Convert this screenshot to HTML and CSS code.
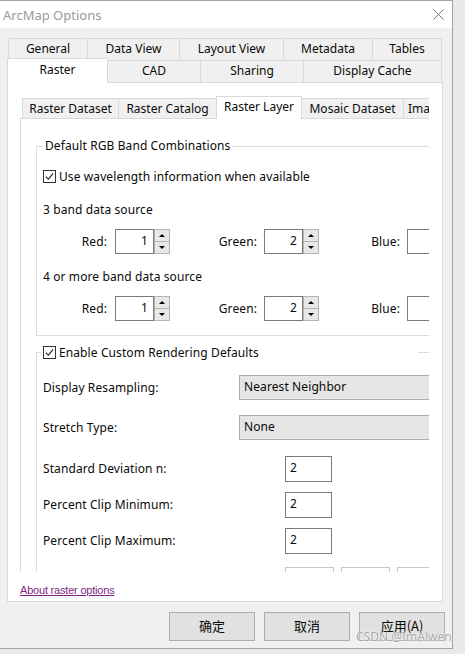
FILE: index.html
```html
<!DOCTYPE html>
<html>
<head>
<meta charset="utf-8">
<link rel="stylesheet" href="styles.css">
</head>
<body>
<div class="window">
  <div class="titlebar">
    <span class="title">ArcMap Options</span>
    <svg class="close" width="11" height="11" viewBox="0 0 11 11"><path d="M0.5 0.5 L10.5 10.5 M10.5 0.5 L0.5 10.5" stroke="#777" stroke-width="1" fill="none"/></svg>
  </div>
  <div class="client">
    <div class="tabrow row1">
      <div class="tab w79">General</div>
      <div class="tab w92">Data View</div>
      <div class="tab w104">Layout View</div>
      <div class="tab w89">Metadata</div>
      <div class="tab w70 last">Tables</div>
    </div>
    <div class="tabrow row2">
      <div class="tab sel w100">Raster</div>
      <div class="tab w93">CAD</div>
      <div class="tab w103">Sharing</div>
      <div class="tab w139 last">Display Cache</div>
    </div>
    <div class="panel">
      <div class="inner">
        <div class="itabs">
          <div class="itab first w96">Raster Dataset</div>
          <div class="itab w98">Raster Catalog</div>
          <div class="itab isel w86">Raster Layer</div>
          <div class="itab w101">Mosaic Dataset</div>
          <div class="itab w56">Imagery</div>
        </div>
        <div class="ipanel">
          <fieldset class="group g1">
            <legend class="legend-text">Default RGB Band Combinations</legend>
            <div class="gbody g1body">
              <div class="checkrow">
                <svg class="cb" width="13" height="13" viewBox="0 0 13 13"><rect x="0.5" y="0.5" width="12" height="12" fill="#fff" stroke="#333"/><path d="M2.8 6.6 L5.3 9.2 L10.2 3.4" stroke="#222" stroke-width="1.1" fill="none"/></svg>
                <span>Use wavelength information when available</span>
              </div>
              <div class="sub">3 band data source</div>
              <div class="spinrow">
                <span class="lbl l1">Red:</span>
                <div class="spin"><div class="sval">1</div><div class="sbtns"><div class="sbtn"><i class="up"></i></div><div class="sbtn dn"><i class="down"></i></div></div></div>
                <span class="lbl l2">Green:</span>
                <div class="spin"><div class="sval">2</div><div class="sbtns"><div class="sbtn"><i class="up"></i></div><div class="sbtn dn"><i class="down"></i></div></div></div>
                <span class="lbl l3">Blue:</span>
                <div class="spin"><div class="sval">3</div><div class="sbtns"><div class="sbtn"><i class="up"></i></div><div class="sbtn dn"><i class="down"></i></div></div></div>
              </div>
              <div class="sub sub2">4 or more band data source</div>
              <div class="spinrow">
                <span class="lbl l1">Red:</span>
                <div class="spin"><div class="sval">1</div><div class="sbtns"><div class="sbtn"><i class="up"></i></div><div class="sbtn dn"><i class="down"></i></div></div></div>
                <span class="lbl l2">Green:</span>
                <div class="spin"><div class="sval">2</div><div class="sbtns"><div class="sbtn"><i class="up"></i></div><div class="sbtn dn"><i class="down"></i></div></div></div>
                <span class="lbl l3">Blue:</span>
                <div class="spin"><div class="sval">3</div><div class="sbtns"><div class="sbtn"><i class="up"></i></div><div class="sbtn dn"><i class="down"></i></div></div></div>
              </div>
            </div>
          </fieldset>
          <fieldset class="group g2">
            <legend class="legend-check">
              <svg class="cb" width="13" height="13" viewBox="0 0 13 13"><rect x="0.5" y="0.5" width="12" height="12" fill="#fff" stroke="#333"/><path d="M2.8 6.6 L5.3 9.2 L10.2 3.4" stroke="#222" stroke-width="1.1" fill="none"/></svg>
              <span>Enable Custom Rendering Defaults</span>
            </legend>
            <div class="gbody g2body">
              <div class="frow r1">
                <span class="flbl">Display Resampling:</span>
                <div class="combo">Nearest Neighbor</div>
              </div>
              <div class="frow r2">
                <span class="flbl">Stretch Type:</span>
                <div class="combo">None</div>
              </div>
              <div class="frow r3">
                <span class="flbl wide">Standard Deviation n:</span>
                <div class="tbox">2</div>
              </div>
              <div class="frow r4">
                <span class="flbl wide">Percent Clip Minimum:</span>
                <div class="tbox">2</div>
              </div>
              <div class="frow r4">
                <span class="flbl wide">Percent Clip Maximum:</span>
                <div class="tbox">2</div>
              </div>
              <div class="frow r5">
                <span class="flbl wide"></span>
                <div class="gbox"></div>
                <div class="gbox"></div>
                <div class="gbox"></div>
              </div>
            </div>
          </fieldset>
        </div>
      </div>
      <a class="about" href="#">About raster options</a>
    </div>
    <div class="buttons">
      <div class="btn">确定</div>
      <div class="btn">取消</div>
      <div class="btn">应用(A)</div>
    </div>
  </div>
</div>
<div class="watermark">CSDN @ImAlwen</div>
</body>
</html>
```
FILE: styles.css
```css
* { box-sizing: border-box; }
html, body { margin: 0; padding: 0; }
body {
  width: 465px;
  height: 654px;
  overflow: hidden;
  position: relative;
  background: #e9e9e9;
  font-family: "Noto Sans", "Noto Sans CJK SC", sans-serif;
  font-size: 12px;
  color: #0a0a0a;
}
.window {
  width: 453px;
  height: 649px;
  border-top: 1px solid #a3a3a3;
  border-right: 1px solid #a3a3a3;
  border-bottom: 1px solid #a3a3a3;
  background: #f0f0f0;
  display: flex;
  flex-direction: column;
}
.titlebar {
  height: 27px;
  background: #fff;
  display: flex;
  align-items: center;
  justify-content: space-between;
  padding: 0 8px 0 3px;
}
.title { font-size: 13px; color: #9a9a9a; }
.close { display: block; margin-top: -1px; }
.client { padding: 10px 7px 0 7px; }

.tabrow { display: flex; height: 22px; align-items: flex-start; }
.row1 { margin-left: 1px; }
.tab {
  flex-shrink: 0;
  height: 22px;
  border-top: 1px solid #d9d9d9;
  border-left: 1px solid #d9d9d9;
  background: #f0f0f0;
  text-align: center;
  line-height: 20px;
}
.tab.last { border-right: 1px solid #d9d9d9; }
.tab.sel {
  position: relative;
  z-index: 1;
  height: 25px;
  margin-top: -2px;
  background: #fff;
  line-height: 21px;
}
.w56 { width: 56px; } .w70 { width: 70px; } .w79 { width: 79px; } .w86 { width: 86px; } .w89 { width: 89px; }
.w92 { width: 92px; } .w93 { width: 93px; } .w96 { width: 96px; } .w98 { width: 98px; }
.w100 { width: 100px; } .w101 { width: 101px; } .w103 { width: 103px; } .w104 { width: 104px; }
.w139 { width: 139px; }

.panel {
  width: 436px;
  height: 520px;
  border: 1px solid #d9d9d9;
  background: #fff;
  padding: 13px 0 0 12px;
}
.inner {
  width: 409px;
  height: 476px;
  overflow: hidden;
  display: flex;
  flex-direction: column;
}
.itabs { display: flex; height: 22px; align-items: flex-end; flex-shrink: 0; }
.itab {
  flex-shrink: 0;
  height: 20px;
  border-top: 1px solid #d9d9d9;
  border-left: 1px solid #d9d9d9;
  background: #f0f0f0;
  text-align: center;
  line-height: 19px;
  white-space: nowrap;
  overflow: hidden;
}
.itab.first { margin-left: 2px; }
.itab.isel {
  position: relative;
  z-index: 1;
  height: 23px;
  margin-bottom: -1px;
  background: #fff;
  border-right: 1px solid #d9d9d9;
  line-height: 20px;
}
.itab.isel + .itab { border-left: none; }
.ipanel {
  flex: 1;
  border-top: 1px solid #d9d9d9;
  border-left: 1px solid #d9d9d9;
  background: #fff;
  padding: 19px 0 0 15px;
  letter-spacing: 0.1px;
}
.group {
  margin: 0;
  padding: 0;
  min-width: 0;
  width: 430px;
  border: 1px solid #dcdcdc;
}
.legend-text {
  margin-left: 6px;
  padding: 0 2px;
  line-height: 16px;
  height: 16px;
  background: #fff;
}
.legend-check {
  margin-left: 4px;
  padding: 0 0 0 2px;
  width: 377px;
  height: 16px;
  display: flex;
  align-items: center;
  gap: 3px;
  background: #fff;
}
.cb { display: block; flex-shrink: 0; }
.g1body { padding: 12px 0 14px 6px; }
.checkrow { height: 20px; display: flex; align-items: center; gap: 3px; }
.sub { margin-top: 14px; height: 20px; line-height: 20px; }
.sub2 { margin-top: 13px; }
.spinrow { margin-top: 9px; height: 25px; display: flex; align-items: center; }
.lbl { text-align: right; flex-shrink: 0; }
.l1 { width: 64px; margin-right: 8px; }
.l2 { width: 87px; margin-right: 7px; }
.l3 { width: 81px; margin-right: 7px; }
.spin { display: flex; flex-shrink: 0; }
.sval {
  width: 39px;
  height: 25px;
  border: 1px solid #7a7a7a;
  text-align: right;
  padding-right: 5px;
  line-height: 21px;
  background: #fff;
}
.sbtns { width: 16px; display: flex; flex-direction: column; }
.sbtn {
  height: 13px;
  border: 1px solid #b4b4b4;
  background: #e8e8e8;
  display: flex;
  align-items: center;
  justify-content: center;
}
.sbtn.dn { margin-top: -1px; }
.up, .down { display: block; width: 0; height: 0; border-left: 3px solid transparent; border-right: 3px solid transparent; }
.up { border-bottom: 3px solid #000; }
.down { border-top: 3px solid #000; }

.g2 { margin-top: 8px; height: 260px; }
.g2body { padding: 0 0 0 6px; }
.frow { display: flex; align-items: center; height: 25px; }
.r1 { margin-top: 15px; }
.r2 { margin-top: 15px; }
.r3 { margin-top: 16px; }
.r4 { margin-top: 11px; }
.r5 { margin-top: 14px; }
.flbl { width: 196px; flex-shrink: 0; }
.flbl.wide { width: 242px; }
.combo {
  flex-shrink: 0;
  width: 200px;
  height: 25px;
  border: 1px solid #adadad;
  background: #e5e5e5;
  padding-left: 4px;
  line-height: 22px;
}
.tbox {
  width: 47px;
  height: 26px;
  border: 1px solid #7a7a7a;
  padding-left: 4px;
  line-height: 22px;
}
.gbox {
  flex-shrink: 0;
  width: 49px;
  height: 25px;
  border: 1px solid #c8c8c8;
  margin-right: 7px;
}
.about {
  display: inline-block;
  margin-top: 10px;
  line-height: 16px;
  font-family: "Liberation Sans", Arial, sans-serif;
  font-size: 11px;
  letter-spacing: -0.2px;
  color: #7f1f86;
  text-decoration: underline;
}
.buttons {
  margin-top: 10px;
  display: flex;
  justify-content: flex-end;
  gap: 9px;
}
.btn {
  width: 86px;
  height: 29px;
  border: 1px solid #adadad;
  background: #e1e1e1;
  text-align: center;
  line-height: 26px;
  font-family: "Noto Sans CJK SC", sans-serif;
  font-size: 13px;
}
.watermark {
  position: absolute;
  left: 356px;
  top: 628px;
  font-size: 12px;
  color: #a8a8a8;
  text-shadow: 0 0 2px #fff, 0 0 1px #fff;
  font-family: "Noto Sans", sans-serif;
}
```
